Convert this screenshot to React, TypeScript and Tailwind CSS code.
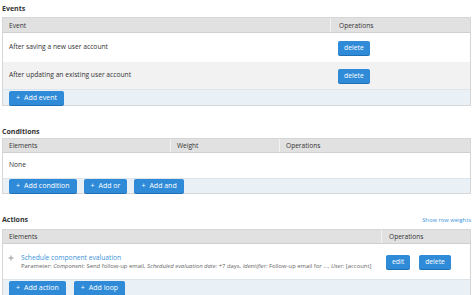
import React from "react";

const font = { fontFamily: '"Open Sans", "Noto Sans", sans-serif' };

function Btn({ children }: { children: React.ReactNode }) {
  return (
    <span className="inline-flex items-center h-[14px] px-[6px] rounded-[2px] bg-[#2f8bd8] text-white text-[6.8px] leading-[14px] shadow-[0_1px_0_#1f6fb5] whitespace-nowrap">
      {children}
    </span>
  );
}

function AddBtn({ label }: { label: string }) {
  return (
    <span className="inline-flex items-center h-[14px] px-[7px] rounded-[2px] bg-[#2f8bd8] text-white text-[7px] leading-[14px] shadow-[0_1px_0_#1f6fb5] whitespace-nowrap">
      <span className="mr-[4px] text-[7px]">+</span>
      {label}
    </span>
  );
}

export default function App() {
  return (
    <div className="w-[474px] h-[295px] overflow-hidden bg-white text-[#333] pl-[2px] pr-[3px]" style={font}>
      {/* Events */}
      <div className="pt-[5px] h-[17px] text-[7px] leading-[8px] font-bold text-[#333]">Events</div>
      <div className="border border-[#d6d6d6]">
        <div className="flex h-[15px] bg-[#e1e1e1] border-b border-[#cfcfcf] text-[6.6px] leading-[15px]">
          <div className="w-[327px] pl-[6px]">Event</div>
          <div className="flex-1 pl-[8px] border-l border-[#f2f2f2]">Operations</div>
        </div>
        <div className="flex h-[29px] items-center bg-white text-[6.7px]">
          <div className="w-[327px] pl-[6px]">After saving a new user account</div>
          <div className="flex-1 pl-[8px]"><Btn>delete</Btn></div>
        </div>
        <div className="flex h-[27px] items-center bg-[#f2f2f2] text-[6.7px]">
          <div className="w-[327px] pl-[6px]">After updating an existing user account</div>
          <div className="flex-1 pl-[8px]"><Btn>delete</Btn></div>
        </div>
        <div className="flex h-[16px] items-center bg-[#e9f1f6] border-t border-[#dde5ea] pl-[6px]">
          <AddBtn label="Add event" />
        </div>
      </div>

      {/* Conditions */}
      <div className="mt-[22px] h-[10px] text-[7px] leading-[8px] font-bold">Conditions</div>
      <div className="border border-[#d6d6d6]">
        <div className="flex h-[14px] bg-[#e1e1e1] border-b border-[#cfcfcf] text-[6.6px] leading-[14px]">
          <div className="w-[167px] pl-[6px]">Elements</div>
          <div className="w-[109px] pl-[6px] border-l border-[#f2f2f2]">Weight</div>
          <div className="flex-1 pl-[6px] border-l border-[#f2f2f2]">Operations</div>
        </div>
        <div className="flex h-[25px] items-center bg-white text-[6.7px] pl-[6px]">None</div>
        <div className="flex h-[15px] items-center gap-[7px] bg-[#e9f1f6] border-t border-[#dde5ea] pl-[6px]">
          <AddBtn label="Add condition" />
          <AddBtn label="Add or" />
          <AddBtn label="Add and" />
        </div>
      </div>

      {/* Actions */}
      <div className="mt-[22px] h-[13px] flex items-start justify-between">
        <span className="text-[7px] leading-[8px] font-bold">Actions</span>
        <span className="text-[5.8px] leading-[8px] text-[#3b93dc]">Show row weights</span>
      </div>
      <div className="border border-[#d6d6d6] relative">
        <div className="flex h-[14px] bg-[#e1e1e1] border-b border-[#cfcfcf] text-[6.6px] leading-[14px]">
          <div className="w-[378px] pl-[6px]">Elements</div>
          <div className="flex-1 pl-[7px] border-l border-[#f2f2f2]">Operations</div>
        </div>
        <div className="flex h-[35px] items-center bg-white">
          <div className="w-[378px] flex items-start pl-[5px]">
            <svg width="6" height="6" viewBox="0 0 6 6" className="mt-[2px] mr-[7px] shrink-0">
              <path d="M3 0.5V5.5M0.5 3H5.5" stroke="#9a9a9a" strokeWidth="1" />
            </svg>
            <div>
              <div className="text-[6.7px] leading-[9px] text-[#3b93dc]">Schedule component evaluation</div>
              <div className="text-[5.9px] leading-[9px] text-[#666] whitespace-nowrap">
                Parameter: <i>Component:</i> Send follow-up email, <i>Scheduled evaluation date:</i> +7 days, <i>Identifier:</i> Follow-up email for ..., <i>User:</i> [account]
              </div>
            </div>
          </div>
          <div className="flex-1 pl-[5px] flex gap-[9px]">
            <Btn>edit</Btn>
            <Btn>delete</Btn>
          </div>
        </div>
        <div className="flex h-[17px] items-center gap-[8px] bg-[#e9f1f6] border-t border-[#dde5ea] pl-[6px]">
          <AddBtn label="Add action" />
          <AddBtn label="Add loop" />
        </div>
        <div className="absolute right-[-1px] bottom-[-2px] w-[7px] h-[3px] bg-[#444]" />
      </div>
    </div>
  );
}
